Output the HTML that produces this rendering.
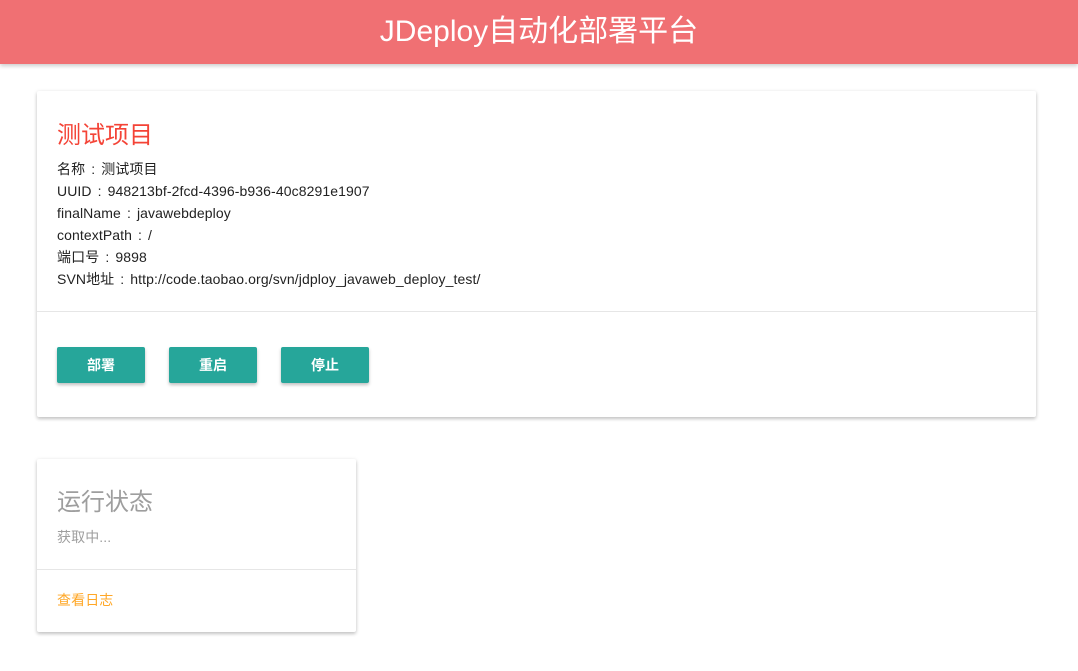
<!DOCTYPE html>
<html><head><meta charset="utf-8"><style>
*{margin:0;padding:0;box-sizing:border-box}
body{width:1078px;height:671px;background:#fff;font-family:"Liberation Sans","Noto Sans CJK SC",sans-serif;position:relative;overflow:hidden}
.hdr{position:absolute;left:0;top:0;width:1078px;height:64px;background:#f07073;box-shadow:0 2px 4px rgba(0,0,0,.2);color:#fff;font-size:30px;text-align:center;line-height:64px}
.card{position:absolute;background:#fff;border-radius:2px;box-shadow:0 2px 3px rgba(0,0,0,.16),0 1px 5px rgba(0,0,0,.12)}
.t{position:absolute;left:20px;font-size:24px;line-height:30px}
.l{position:absolute;left:20px;font-size:14px;line-height:22px;color:#222;letter-spacing:0.1px}
.c{display:inline-block;width:14px;text-align:center;margin:0 1px}
.hr{position:absolute;left:0;right:0;height:1px;background:#e6e6e6}
.b{position:absolute;top:256px;width:88px;height:36px;background:#26a69a;color:#fff;font-size:14px;font-weight:bold;text-align:center;line-height:36px;border-radius:2px;box-shadow:0 2px 3px rgba(0,0,0,.25)}
</style></head><body>
<div class="hdr">JDeploy自动化部署平台</div>
<div class="card" style="left:37px;top:91px;width:999px;height:326px">
<div class="t" style="top:30px;color:#f44336">测试项目</div>
<div class="l" style="top:67px">名称<span class="c">:</span>测试项目<br>UUID<span class="c">:</span>948213bf-2fcd-4396-b936-40c8291e1907<br>finalName<span class="c">:</span>javawebdeploy<br>contextPath<span class="c">:</span>/<br>端口号<span class="c">:</span>9898<br>SVN地址<span class="c">:</span>http://code.taobao.org/svn/jdploy_javaweb_deploy_test/</div>
<div class="hr" style="top:220px"></div>
<div class="b" style="left:20px">部署</div>
<div class="b" style="left:132px">重启</div>
<div class="b" style="left:244px">停止</div>
</div>
<div class="card" style="left:37px;top:459px;width:319px;height:173px">
<div class="t" style="top:29px;color:#9e9e9e">运行状态</div>
<div class="l" style="top:67px;color:#9e9e9e">获取中...</div>
<div class="hr" style="top:110px"></div>
<div class="l" style="top:130px;color:#ffa726">查看日志</div>
</div>
</body></html>
